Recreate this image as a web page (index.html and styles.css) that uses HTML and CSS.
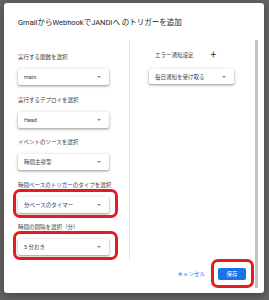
FILE: index.html
```html
<!DOCTYPE html>
<html lang="ja">
<head>
<meta charset="utf-8">
<link rel="stylesheet" href="styles.css">
</head>
<body>
<div class="dialog">
  <div class="title">GmailからWebhookでJANDIへ のトリガーを追加</div>
  <div class="main">
    <div class="scroll">
      <div class="cols">
        <div class="col-left">
          <div class="field">
            <div class="label">実行する関数を選択</div>
            <div class="select"><span>main</span><i class="caret"></i></div>
          </div>
          <div class="field">
            <div class="label">実行するデプロイを選択</div>
            <div class="select"><span>Head</span><i class="caret"></i></div>
          </div>
          <div class="field">
            <div class="label">イベントのソースを選択</div>
            <div class="select"><span>時間主導型</span><i class="caret"></i></div>
          </div>
          <div class="field">
            <div class="label">時間ベースのトリガーのタイプを選択</div>
            <div class="select marked"><span>分ベースのタイマー</span><i class="caret"></i><b class="ring ring-field"></b></div>
          </div>
          <div class="field">
            <div class="label">時間の間隔を選択（分）</div>
            <div class="select marked"><span>5 分おき</span><i class="caret"></i><b class="ring ring-field"></b></div>
          </div>
        </div>
        <div class="col-right">
          <div class="label-row"><span class="label">エラー通知設定</span><span class="plus">+</span></div>
          <div class="select small"><span>毎日通知を受け取る</span><i class="caret"></i></div>
        </div>
      </div>
      <div class="footer">
        <span class="cancel">キャンセル</span>
        <span class="save">保存<b class="ring ring-save"></b></span>
      </div>
    </div>
    <div class="thumb"></div>
  </div>
</div>
</body>
</html>
```
FILE: styles.css
```css
html, body {
  margin: 0;
  padding: 0;
}
body {
  width: 269px;
  height: 300px;
  background: #646464;
  font-family: Roboto, "Noto Sans CJK JP", sans-serif;
  overflow: hidden;
  padding: 3px 0 0 4px;
  box-sizing: border-box;
}
.dialog {
  width: 260px;
  height: 290px;
  background: #fff;
  border-radius: 3px;
  box-shadow: 0 2px 8px rgba(0,0,0,0.35);
  display: flex;
  flex-direction: column;
}
.title {
  padding: 15px 0 0 14px;
  font-size: 7.5px;
  line-height: 10px;
  color: #202124;
  white-space: nowrap;
}
.main {
  margin-top: 12px;
  display: flex;
  flex: 1;
  min-height: 0;
}
.scroll {
  flex: 1;
  display: flex;
  flex-direction: column;
}
.thumb {
  width: 3px;
  height: 248px;
  background: #c4c4c4;
  margin-right: 6px;
}
.cols {
  display: flex;
  height: 220px;
}
.col-left {
  width: 111px;
  padding: 13px 0 0 14px;
  border-right: 1px solid #e3e3e3;
}
.col-right {
  flex: 1;
  padding: 11px 0 0 19px;
}
.field {
  margin-bottom: 10.5px;
}
.label {
  font-size: 5.5px;
  line-height: 8px;
  color: #3c4043;
  margin-bottom: 8px;
  white-space: nowrap;
}
.select {
  position: relative;
  width: 91px;
  height: 16px;
  box-sizing: border-box;
  background: #fff;
  border-radius: 2px;
  box-shadow: 0 1px 2px rgba(0,0,0,0.28), 0 1px 3px 1px rgba(0,0,0,0.12);
  display: flex;
  align-items: center;
  justify-content: space-between;
  padding: 0 8px 0 6px;
  font-size: 5.5px;
  color: #3c4043;
}
.select.small {
  width: 85px;
  height: 15px;
}
.caret {
  width: 0;
  height: 0;
  border-left: 2px solid transparent;
  border-right: 2px solid transparent;
  border-top: 2px solid #8a8a8a;
}
.label-row {
  display: flex;
  align-items: center;
  margin: 0 0 10px 6px;
  height: 8px;
}
.label-row .label {
  margin: 0;
}
.plus {
  margin-left: 17px;
  font-size: 10px;
  line-height: 8px;
  color: #444;
}
.ring {
  position: absolute;
  border: 3px solid #e31b23;
  border-radius: 7px;
  pointer-events: none;
}
.ring-field {
  left: -5px;
  right: -9px;
  top: -8px;
  bottom: -5px;
}
.ring-save {
  left: -7px;
  right: -8px;
  top: -9px;
  bottom: -8px;
}
.footer {
  display: flex;
  align-items: center;
  justify-content: flex-end;
  height: 28px;
  padding-right: 9px;
}
.cancel {
  font-size: 5.5px;
  color: #1a73e8;
  margin-right: 13px;
}
.save {
  position: relative;
  width: 28px;
  height: 12px;
  background: #1a73e8;
  color: #fff;
  font-size: 5.5px;
  border-radius: 2px;
  display: flex;
  align-items: center;
  justify-content: center;
}
```
